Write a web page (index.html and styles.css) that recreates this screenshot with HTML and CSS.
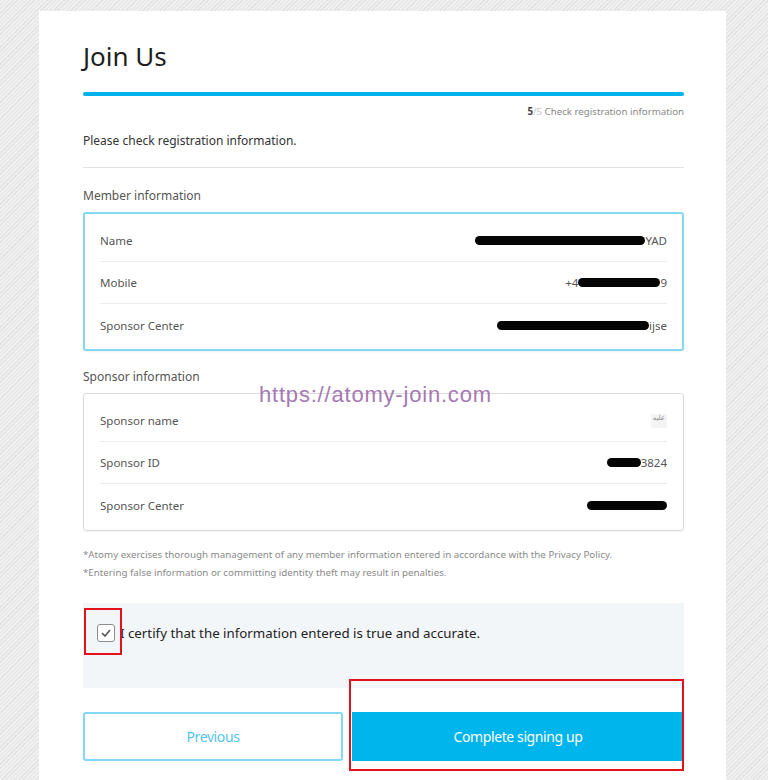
FILE: index.html
```html
<!DOCTYPE html>
<html lang="en">
<head>
  <meta charset="UTF-8">
  <meta name="viewport" content="width=device-width, initial-scale=1.0">
  <title>Join Us - Check registration information</title>
  <link rel="stylesheet" href="styles.css">
</head>
<body>

  <div class="card">
    <h1>Join Us</h1>

    <!-- Progress -->
    <div class="progress"></div>
    <p class="step"><b>5</b><span class="step-total">/5</span> Check registration information</p>

    <p class="intro">Please check registration information.</p>
    <hr class="divider">

    <!-- Member information -->
    <h2 class="section-title">Member information</h2>
    <div class="info-box info-box--member">
      <div class="info-row">
        <span class="info-label">Name</span>
        <span class="info-value"><span class="blot blot-name"></span>YAD</span>
      </div>
      <div class="info-row">
        <span class="info-label">Mobile</span>
        <span class="info-value">+4<span class="blot blot-mobile"></span>9</span>
      </div>
      <div class="info-row">
        <span class="info-label">Sponsor Center</span>
        <span class="info-value"><span class="blot blot-center"></span>ijse</span>
      </div>
    </div>

    <!-- Sponsor information -->
    <h2 class="section-title section-title--next">Sponsor information</h2>
    <div class="sponsor-wrap">
      <div class="info-box">
        <div class="info-row">
          <span class="info-label">Sponsor name</span>
          <span class="info-value"><span class="faint">علیه</span></span>
        </div>
        <div class="info-row">
          <span class="info-label">Sponsor ID</span>
          <span class="info-value"><span class="blot blot-id"></span>3824</span>
        </div>
        <div class="info-row">
          <span class="info-label">Sponsor Center</span>
          <span class="info-value"><span class="blot blot-sponsor"></span></span>
        </div>
      </div>
      <span class="watermark">https://atomy-join.com</span>
    </div>

    <div class="notes">
      <p>*Atomy exercises thorough management of any member information entered in accordance with the Privacy Policy.</p>
      <p>*Entering false information or committing identity theft may result in penalties.</p>
    </div>

    <!-- Agreement -->
    <div class="agree">
      <label class="agree-label">
        <span class="checkbox">
          <svg width="10" height="8" viewBox="0 0 10 8"><polyline points="1,4 4,7 9,1" fill="none" stroke="#555" stroke-width="1.6"/></svg>
        </span>
        I certify that the information entered is true and accurate.
      </label>
      <span class="mark mark--check"></span>
    </div>

    <div class="buttons">
      <button class="btn btn-prev">Previous</button>
      <button class="btn btn-done">Complete signing up</button>
      <span class="mark mark--submit"></span>
    </div>
  </div>

</body>
</html>
```

FILE: styles.css
```css
/* page */
body {
  margin: 0;
  font-family: "Noto Sans", "Open Sans", sans-serif;
  color: #333;
  background: repeating-linear-gradient(135deg, #e3e3e3 0 1px, #efefef 1px 3px);
  min-height: 780px;
}

.card {
  box-sizing: border-box;
  width: 687px;
  min-height: 780px;
  margin: 11px 0 0 39px;
  padding: 27px 42px 0 44px;
  background: #fff;
}

h1 {
  margin: 0;
  font-size: 26px;
  line-height: 36px;
  font-weight: normal;
  color: #1e1e1e;
}

.progress {
  height: 4px;
  margin-top: 18px;
  background: #00b2ec;
  border-radius: 2px;
}

.step {
  margin: 10px 0 0;
  font-size: 9.7px;
  line-height: 12px;
  text-align: right;
  color: #888;
}
.step b { color: #444; }
.step-total { color: #c4c4c4; }

.intro {
  margin: 14px 0 0;
  font-size: 12px;
  line-height: 18px;
  color: #333;
}

.divider {
  margin: 17px 0 0;
  border: 0;
  border-top: 1px solid #e2e2e2;
}

.section-title {
  margin: 19px 0 0;
  font-size: 12px;
  line-height: 18px;
  font-weight: normal;
  color: #555;
}
.section-title--next { margin-top: 17px; }

/* info boxes */
.info-box {
  margin-top: 7px;
  padding: 6px 16px 4px;
  border: 1px solid #dcdcdc;
  border-radius: 3px;
  box-shadow: 0 1px 2px rgba(0, 0, 0, 0.06);
}
.info-box--member {
  padding: 6px 15px 3px;
  border: 2px solid #84d8f5;
}

.info-row {
  display: flex;
  justify-content: space-between;
  align-items: center;
  height: 42px;
  box-sizing: border-box;
  border-bottom: 1px solid #ececec;
  font-size: 11.5px;
  color: #555;
}
.info-row:last-child { border-bottom: 0; }

.info-value {
  display: flex;
  align-items: center;
}

.blot {
  display: inline-block;
  height: 9px;
  background: #050505;
  border-radius: 5px;
}
.blot-name { width: 170px; }
.blot-mobile { width: 82px; }
.blot-center { width: 152px; }
.blot-id { width: 34px; }
.blot-sponsor { width: 80px; }

.faint {
  display: inline-block;
  padding: 0 2px 6px;
  font-family: "DejaVu Sans", sans-serif;
  font-size: 7px;
  color: #8a8a8a;
  background: #f4f4f4;
}

.sponsor-wrap { position: relative; }

.watermark {
  position: absolute;
  top: -11px;
  left: 176px;
  font-family: "Liberation Sans", Arial, sans-serif;
  font-size: 22px;
  letter-spacing: 0.8px;
  color: #a47ab3;
  white-space: nowrap;
}

.notes {
  margin-top: 15px;
  font-size: 9.75px;
  line-height: 18px;
  color: #8a8a8a;
}
.notes p { margin: 0; }

/* agreement */
.agree {
  position: relative;
  box-sizing: border-box;
  height: 85px;
  margin-top: 21px;
  padding: 21px 14px 0;
  background: #f3f6f9;
}

.agree-label {
  display: flex;
  align-items: center;
  gap: 5px;
  font-size: 13.3px;
  line-height: 18px;
  color: #222;
}

.checkbox {
  display: flex;
  align-items: center;
  justify-content: center;
  box-sizing: border-box;
  width: 18px;
  height: 18px;
  border: 1px solid #8c8c8c;
  border-radius: 3px;
  background: #fff;
}

/* buttons */
.buttons {
  position: relative;
  display: flex;
  gap: 9px;
  margin-top: 24px;
}

.btn {
  height: 49px;
  font-family: inherit;
  font-size: 14px;
  letter-spacing: -0.4px;
  border-radius: 3px;
  cursor: pointer;
}

.btn-prev {
  width: 260px;
  background: #fff;
  border: 2px solid #82d9f7;
  color: #55c4ee;
}

.btn-done {
  flex: 1;
  background: #00b4ec;
  border: 0;
  border-radius: 0;
  color: #fff;
}

/* red annotation boxes */
.mark {
  position: absolute;
  box-sizing: border-box;
  border: 2px solid #e3111b;
}
.mark--check {
  left: 1px;
  top: 5px;
  width: 38px;
  height: 47px;
}
.mark--submit {
  left: 266px;
  top: -33px;
  width: 335px;
  height: 92px;
}
```
